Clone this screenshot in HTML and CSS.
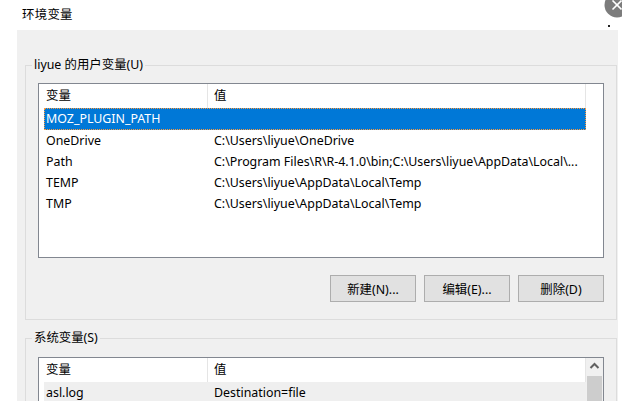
FILE: index.html
```html
<!DOCTYPE html>
<html>
<head>
  <meta charset="utf-8">
  <title>环境变量</title>
  <link rel="stylesheet" href="styles.css">
</head>
<body>

  <div class="titlebar">
    <span class="title">环境变量</span>
    <svg class="close" width="30" height="30" viewBox="0 0 30 30">
      <circle cx="15" cy="13" r="12.5" fill="#7c7c7c"/>
      <path d="M10.5 8.5 L19.5 17.5 M19.5 8.5 L10.5 17.5" stroke="#fff" stroke-width="1.6"/>
    </svg>
    <span class="close-mark"></span>
  </div>

  <div class="panel">
    <fieldset class="group user-group">
      <legend>liyue 的用户变量(U)</legend>
      <div class="list user-list">
        <div class="list-body">
          <div class="list-head">
            <span class="head-name">变量</span>
            <span class="head-value">值</span>
          </div>
          <div class="row selected"><span class="cell-name">MOZ_PLUGIN_PATH</span><span class="cell-value"></span></div>
          <div class="row"><span class="cell-name">OneDrive</span><span class="cell-value">C:\Users\liyue\OneDrive</span></div>
          <div class="row"><span class="cell-name">Path</span><span class="cell-value">C:\Program Files\R\R-4.1.0\bin;C:\Users\liyue\AppData\Local\...</span></div>
          <div class="row"><span class="cell-name">TEMP</span><span class="cell-value">C:\Users\liyue\AppData\Local\Temp</span></div>
          <div class="row"><span class="cell-name">TMP</span><span class="cell-value">C:\Users\liyue\AppData\Local\Temp</span></div>
        </div>
        <div class="list-side"></div>
      </div>
      <div class="buttons">
        <button>新建(N)...</button>
        <button>编辑(E)...</button>
        <button>删除(D)</button>
      </div>
    </fieldset>

    <fieldset class="group system-group">
      <legend>系统变量(S)</legend>
      <div class="list system-list">
        <div class="list-body">
          <div class="list-head">
            <span class="head-name">变量</span>
            <span class="head-value">值</span>
          </div>
          <div class="row hover"><span class="cell-name">asl.log</span><span class="cell-value">Destination=file</span></div>
        </div>
        <div class="list-side scrollbar">
          <div class="scroll-up">
            <svg width="17" height="17" viewBox="0 0 17 17">
              <path d="M4.5 10 L8.5 6 L12.5 10" fill="none" stroke="#606060" stroke-width="2"/>
            </svg>
          </div>
          <div class="scroll-thumb"></div>
        </div>
      </div>
    </fieldset>
  </div>

</body>
</html>
```

FILE: styles.css
```css
html, body {
  margin: 0;
  padding: 0;
  width: 622px;
  height: 401px;
  overflow: hidden;
  background: #fff;
  font-family: "Noto Sans", "Noto Sans CJK SC", sans-serif;
  font-size: 12.4px;
  color: #000;
}

.titlebar {
  position: relative;
  height: 30px;
  line-height: 29px;
  padding-left: 22px;
}
.title {
  letter-spacing: 0.3px;
}
.close {
  position: absolute;
  top: -8px;
  left: 602px;
}
.close-mark {
  position: absolute;
  left: 608px;
  top: 25px;
  width: 2px;
  height: 2px;
  background: #222;
}

.panel {
  margin-left: 17px;
  width: 601px;
  height: 371px;
  box-sizing: border-box;
  padding: 28px 2px 0 8px;
  background: #f0f0f0;
}

.group {
  box-sizing: border-box;
  width: 591px;
  margin: 0;
  padding: 0 12px 17px 12px;
  border: 1px solid #dcdcdc;
}
.group legend {
  padding: 0 2px;
  margin-left: -6px;
  line-height: 14px;
}
.system-group {
  margin-top: 11px;
  padding-bottom: 0;
  border-bottom: none;
}

.list {
  display: flex;
  box-sizing: border-box;
  width: 566px;
  background: #fff;
  border: 1px solid #828790;
}
.user-list {
  margin-top: 11px;
  height: 175px;
}
.system-list {
  margin-top: 12px;
  height: 44px;
  border-bottom: none;
  overflow: hidden;
}
.list-body {
  width: 547px;
}
.list-side {
  width: 17px;
}

.list-head {
  display: flex;
  height: 24px;
  line-height: 24px;
}
.head-name {
  box-sizing: border-box;
  width: 169px;
  padding-left: 7px;
  border-right: 1px solid #e5e5e5;
}
.head-value {
  box-sizing: border-box;
  flex: 1;
  padding-left: 6px;
  border-right: 1px solid #e5e5e5;
}

.row {
  display: flex;
  box-sizing: border-box;
  height: 21px;
  line-height: 19px;
  margin-left: 5px;
  border: 1px solid transparent;
  white-space: nowrap;
}
.cell-name {
  box-sizing: border-box;
  width: 169px;
  padding-left: 1px;
}
.cell-value {
  flex: 1;
  overflow: hidden;
}
.row.selected {
  height: 22px;
  line-height: 20px;
  background: #0078d7;
  color: #fff;
  border: 1px dotted #ff9a3c;
}
.row.hover {
  background: #efefef;
}

.scrollbar {
  background: #f0f0f0;
  display: flex;
  flex-direction: column;
}
.scroll-up {
  height: 17px;
}
.scroll-up svg {
  display: block;
}
.scroll-thumb {
  flex: 1;
  margin: 1px 1px 0 1px;
  background: #cdcdcd;
}

.buttons {
  display: flex;
  justify-content: flex-end;
  gap: 8px;
  margin-top: 17px;
}
.buttons button {
  width: 86px;
  height: 27px;
  padding: 0;
  font-family: "Noto Sans", "Noto Sans CJK SC", sans-serif;
  font-size: 12.4px;
  color: #000;
  background: #e1e1e1;
  border: 1px solid #adadad;
  border-radius: 0;
}
```
